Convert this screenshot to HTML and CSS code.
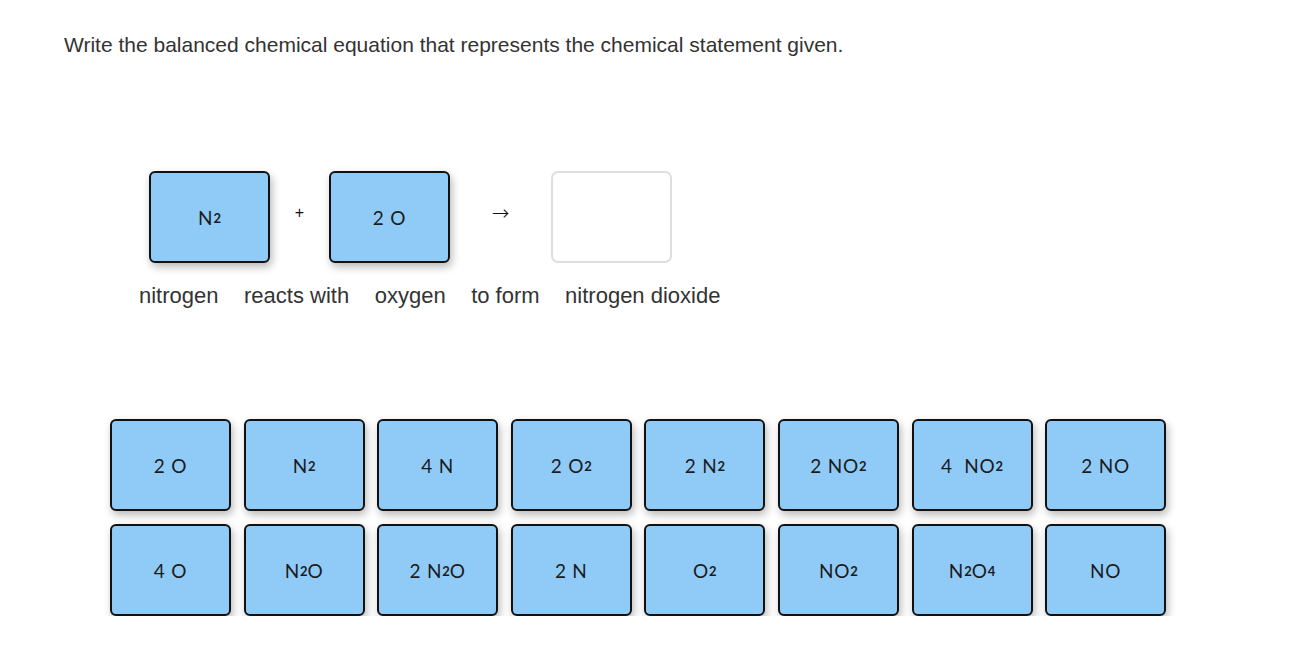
FILE: index.html
```html
<!DOCTYPE html>
<html lang="en">
<head>
    <meta charset="UTF-8">
    <meta name="viewport" content="width=device-width, initial-scale=1.0">
    <title>Balanced Equation</title>
    <link rel="stylesheet" href="styles.css">
</head>
<body>
    <div class="question">
        <p class="prompt">Write the balanced chemical equation that represents the chemical statement given.</p>

        <div class="equation">
            <div class="tile">N<span class="sub">2</span></div>
            <div class="op op-plus">+</div>
            <div class="tile">2 O</div>
            <div class="op op-arrow">→</div>
            <div class="slot"></div>
        </div>

        <div class="words">
            <span>nitrogen</span>
            <span>reacts with</span>
            <span>oxygen</span>
            <span>to form</span>
            <span>nitrogen dioxide</span>
        </div>

        <!-- answer bank -->
        <div class="bank">
            <div class="tile">2 O</div>
            <div class="tile">N<span class="sub">2</span></div>
            <div class="tile">4 N</div>
            <div class="tile">2 O<span class="sub">2</span></div>
            <div class="tile">2 N<span class="sub">2</span></div>
            <div class="tile">2 NO<span class="sub">2</span></div>
            <div class="tile">4&nbsp; NO<span class="sub">2</span></div>
            <div class="tile">2 NO</div>
            <div class="tile">4 O</div>
            <div class="tile">N<span class="sub">2</span>O</div>
            <div class="tile">2 N<span class="sub">2</span>O</div>
            <div class="tile">2 N</div>
            <div class="tile">O<span class="sub">2</span></div>
            <div class="tile">NO<span class="sub">2</span></div>
            <div class="tile">N<span class="sub">2</span>O<span class="sub">4</span></div>
            <div class="tile">NO</div>
        </div>
    </div>
</body>
</html>
```
FILE: styles.css
```css
body {
    margin: 0;
    font-family: "Liberation Sans", Arial, sans-serif;
    color: #333;
    background: #fff;
}
.question {
    padding: 33px 0 0 64px;
}
.prompt {
    margin: 0;
    font-size: 21px;
    line-height: 24px;
}
.equation {
    display: flex;
    align-items: center;
    margin: 114px 0 0 85px;
}
.tile {
    box-sizing: border-box;
    width: 121px;
    height: 92px;
    display: flex;
    align-items: center;
    justify-content: center;
    background-color: #90cbf8;
    border: 2px solid #111;
    border-radius: 6px;
    box-shadow: 2px 4px 8px rgba(0, 0, 0, 0.28);
    font-family: "Lato", sans-serif;
    font-size: 19px;
    letter-spacing: 0.8px;
    color: #1b1b1b;
}
.sub {
    font-size: 13px;
    font-weight: bold;
    letter-spacing: 0;
    position: relative;
    top: 1px;
}
.slot {
    box-sizing: border-box;
    width: 121px;
    height: 92px;
    border: 2px solid #dedede;
    border-radius: 7px;
}
.op {
    display: flex;
    justify-content: center;
    padding-bottom: 8px;
    font-size: 16px;
    color: #111;
}
.op-plus {
    width: 59px;
}
.op-arrow {
    width: 101px;
    font-family: "DejaVu Sans", sans-serif;
    font-size: 21px;
    font-weight: 300;
}
.words {
    display: flex;
    gap: 25.5px;
    margin: 20px 0 0 75px;
    font-size: 22px;
    line-height: 26px;
}
.bank {
    display: grid;
    grid-template-columns: repeat(8, 121px);
    column-gap: 12.6px;
    row-gap: 13px;
    margin: 110px 0 0 46px;
}
```
